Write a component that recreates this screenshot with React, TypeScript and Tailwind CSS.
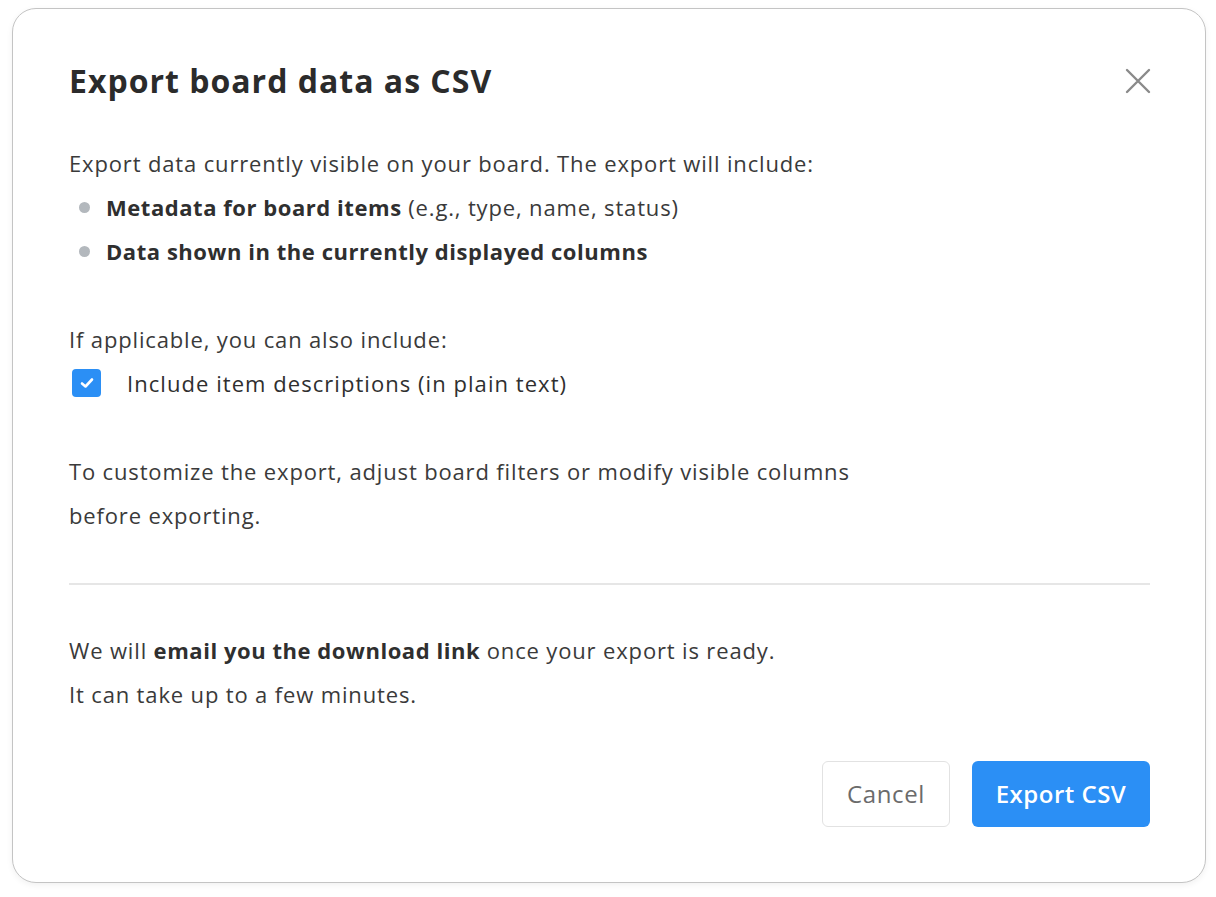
import React, { useState } from 'react'

export default function App() {
  const [includeDescriptions, setIncludeDescriptions] = useState(true)

  return (
    <div className="w-[1216px] h-[897px] bg-white pt-[8px] pl-[12px] font-['Open_Sans','Liberation_Sans',sans-serif]">
      <div className="w-[1194px] h-[875px] border border-[#c4c4c4] rounded-[24px] bg-white pt-[48px] pb-[55px] pl-[56px] pr-[55px] flex flex-col text-[#3a3a3a] shadow-[0_2px_6px_rgba(0,0,0,0.06)]">
        <div className="flex items-center justify-between h-[48px]">
          <h1 className="text-[32px] font-bold text-[#2b2b2b] leading-[48px] tracking-[1px]">Export board data as CSV</h1>
          <button className="w-[28px] h-[28px] mr-[-2px] flex items-center justify-center text-[#8a8a8a]">
            <svg width="26" height="26" viewBox="0 0 26 26" fill="none" stroke="currentColor" strokeWidth="2.4" strokeLinecap="round">
              <path d="M2 2L24 24M24 2L2 24" />
            </svg>
          </button>
        </div>

        <div className="mt-[36px] text-[22px] leading-[44px] tracking-[0.85px]">
          <p>Export data currently visible on your board. The export will include:</p>
          <ul>
            <li className="flex items-center">
              <span className="w-[11px] h-[11px] rounded-full bg-[#b3b8bd] ml-[10px] mr-[16px]" />
              <span>
                <b className="font-bold text-[#2f2f2f] tracking-[0.55px]">Metadata for board items</b> (e.g., type, name, status)
              </span>
            </li>
            <li className="flex items-center">
              <span className="w-[11px] h-[11px] rounded-full bg-[#b3b8bd] ml-[10px] mr-[16px]" />
              <b className="font-bold text-[#2f2f2f] tracking-[0.55px]">Data shown in the currently displayed columns</b>
            </li>
          </ul>

          <p className="mt-[44px]">If applicable, you can also include:</p>
          <label className="flex items-center cursor-pointer">
            <button
              type="button"
              onClick={() => setIncludeDescriptions(!includeDescriptions)}
              className={`w-[29px] h-[28px] ml-[3px] mr-[26px] rounded-[4px] flex items-center justify-center ${
                includeDescriptions ? 'bg-[#2b8ff5]' : 'border-2 border-[#c4c4c4] bg-white'
              }`}
            >
              {includeDescriptions && (
                <svg width="14" height="12" viewBox="0 0 14 12" fill="none" stroke="white" strokeWidth="2.6" strokeLinecap="round" strokeLinejoin="round">
                  <path d="M2 6.5L5.5 9.5L12 2.5" />
                </svg>
              )}
            </button>
            <span className="text-[#2f2f2f] font-medium tracking-[1.05px]">Include item descriptions (in plain text)</span>
          </label>

          <p className="mt-[44px] max-w-[840px]">
            To customize the export, adjust board filters or modify visible columns
            <br />
            before exporting.
          </p>
        </div>

        <div className="mt-[46px] border-t-2 border-[#e6e6e6]" />

        <div className="mt-[43px] text-[22px] leading-[44px] tracking-[0.85px]">
          <p>
            We will <b className="font-bold text-[#2f2f2f] tracking-[0.55px]">email you the download link</b> once your export is ready.
          </p>
          <p>It can take up to a few minutes.</p>
        </div>

        <div className="mt-auto flex justify-end gap-[22px]">
          <button className="w-[128px] h-[66px] rounded-[6px] border border-[#e2e2e2] bg-white text-[24px] text-[#6b6b6b] font-medium tracking-[0.6px]">
            Cancel
          </button>
          <button className="w-[178px] h-[66px] rounded-[6px] bg-[#2b8ff5] text-[24px] text-white font-semibold tracking-[0.5px]">
            Export CSV
          </button>
        </div>
      </div>
    </div>
  )
}
